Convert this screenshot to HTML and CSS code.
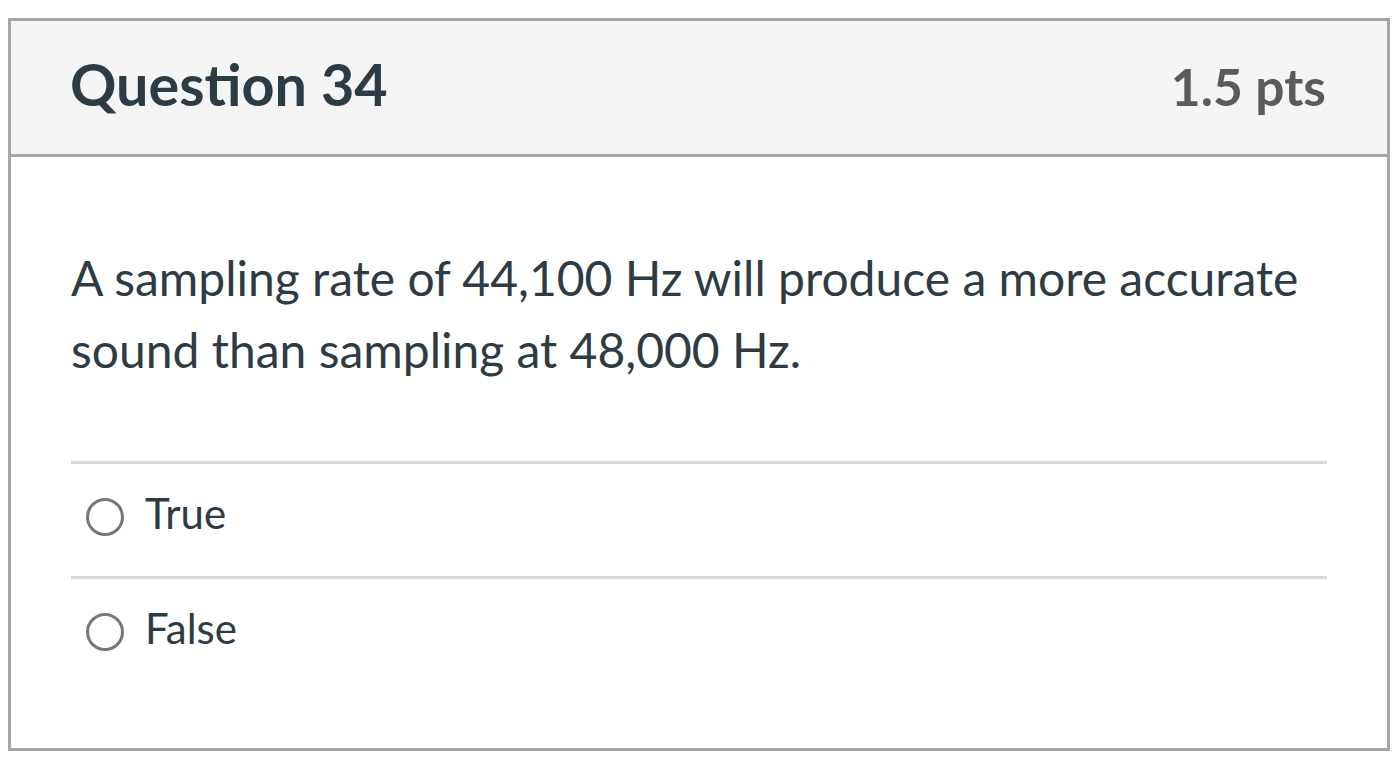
FILE: index.html
```html
<!DOCTYPE html>
<html lang="en">
<head>
<meta charset="utf-8">
<title>Question 34</title>
<link rel="stylesheet" href="styles.css">
</head>
<body>
<div class="page">
  <section class="question">
    <header class="question-header">
      <h2 class="question-title">Question 34</h2>
      <span class="question-points">1.5 pts</span>
    </header>
    <div class="question-body">
      <p class="question-text">A sampling rate of 44,100 Hz will produce a more accurate sound than sampling at 48,000 Hz.</p>
      <div class="answers">
        <label class="answer">
          <span class="radio"></span>
          <span class="answer-label">True</span>
        </label>
        <label class="answer">
          <span class="radio"></span>
          <span class="answer-label">False</span>
        </label>
      </div>
    </div>
  </section>
</div>
</body>
</html>
```

FILE: styles.css
```css
html, body {
  margin: 0;
  padding: 0;
  background: #ffffff;
}

body {
  font-family: Lato, "Noto Sans", "Liberation Sans", sans-serif;
  color: #2d3b45;
}

.page {
  padding: 18px 7px 0 8px;
}

.question {
  border: 3px solid #a6a6a6;
  background: #ffffff;
}

.question-header {
  display: flex;
  justify-content: space-between;
  align-items: baseline;
  background: #f5f5f5;
  border-bottom: 3px solid #a6a6a6;
  padding: 28px 61px 36px 59px;
}

.question-title {
  margin: 0;
  font-size: 57.5px;
  font-weight: 700;
  line-height: 1.2;
  color: #2d3b45;
}

.question-points {
  font-size: 51.5px;
  font-weight: 700;
  line-height: 1.2;
  color: #5b5b5b;
}

.question-body {
  padding: 85px 60px 57px 60px;
}

.question-text {
  margin: 0 0 75px 0;
  font-size: 48px;
  line-height: 72px;
}

.answers {
  display: flex;
  flex-direction: column;
}

.answer {
  display: flex;
  align-items: center;
  gap: 21px;
  height: 112px;
  border-top: 3px solid #d9d9d9;
  padding-left: 15px;
}

.radio {
  width: 32px;
  height: 32px;
  border: 3px solid #777777;
  border-radius: 50%;
  flex: 0 0 auto;
  margin-top: -6px;
}

.answer-label {
  font-size: 42px;
  line-height: 1.2;
  margin-top: -14px;
}
```
